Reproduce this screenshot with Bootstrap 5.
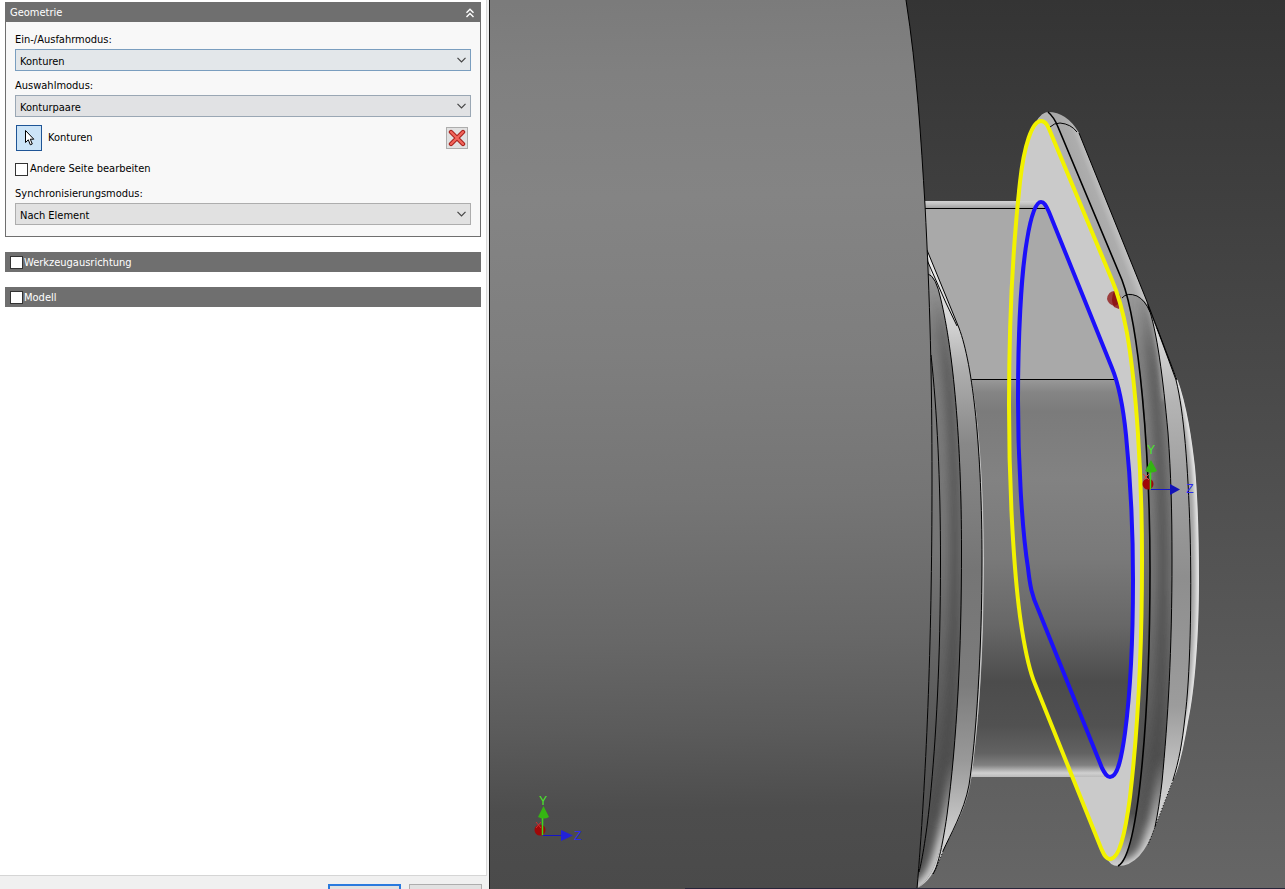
<!DOCTYPE html>
<html lang="de">
<head>
<meta charset="utf-8">
<meta name="viewport" content="width=device-width, initial-scale=1">
<title>Geometrie</title>
<link href="https://cdn.jsdelivr.net/npm/bootstrap@5.3.0/dist/css/bootstrap.min.css" rel="stylesheet">
<style>
  body { font-family: "DejaVu Sans Condensed", "DejaVu Sans", sans-serif; font-size: 11px; line-height: 16px; color: #000; background: #f0f0f0; }
  .workspace { display: grid; grid-template-columns: minmax(300px, 489px) minmax(0, 1fr); grid-template-rows: minmax(0, 1fr); }
  .tool-panel { background: #f0f0f0; }
  .panel-scroll { background: #fff; border-right: 1px solid #d9d9d9; border-bottom: 1px solid #d5d5d5; margin-right: 2px; padding: 2px 5px; }
  .section-bar { height: 20px; background: #6f6f6f; color: #fff; padding: 1px 5px 0; }
  .section-body { background: #f8f8f8; border: 1px solid #6f6f6f; border-top: 0; padding: 10px 9px 11px; }
  .section-gap { margin-top: 15px; }
  .field-label { display: block; margin-bottom: 1px; }
  .next-field { margin-top: 7px; }
  .form-select { height: 22px; padding: 2px 20px 0 4px; font-size: 11px; line-height: 19px; color: #000; border: 1px solid #adadad; border-radius: 0; background-color: #e1e1e1;
    background-image: url("data:image/svg+xml,%3Csvg xmlns='http://www.w3.org/2000/svg' width='9' height='6'%3E%3Cpath d='M.5 .8 4.5 4.8 8.5 .8' fill='none' stroke='%23444' stroke-width='1.2'/%3E%3C/svg%3E");
    background-size: 9px 6px; background-position: right 4px center; }
  .select-hot { background-color: #e3e7ea; border-color: #7a9ebf; }
  .select-cool { background-color: #e1e2e4; border-color: #9aa7b4; }
  .form-check-input[type=checkbox] { width: 13px; height: 13px; margin: 0; border: 1px solid #333; border-radius: 0; background-color: #fff; flex: none; }
  .check-text { padding-left: 2px; }
  .section-bar .check-text { padding-left: 1px; }
  .pick-row { margin: 8px 3px 10px 1px; }
  .pick-text { padding-left: 6px; }
  .other-row { margin-bottom: 9px; }
  .pick-btn { width: 26px; height: 26px; padding: 0; border: 1px solid #1f5596; border-radius: 0; background: #cce4f7; }
  .clear-btn { width: 22px; height: 22px; padding: 0; border: 1px solid #adadad; border-radius: 0; background: #e1e1e1; }
  .bar-btn { padding: 0; border: 0; line-height: 1; color: #fff; }
  .panel-footer { height: 13px; padding: 8px 7px 0; gap: 8px; }
  .footer-btn { width: 73px; height: 23px; padding: 0; border: 1px solid #adadad; border-radius: 0; background: #e1e1e1; }
  .footer-btn.is-default { border: 2px solid #2a7ade; }
  .model-view { border-left: 1px solid #1c1c1c; background: #4c4c4c; }
  .model-view text { font-family: "Liberation Sans", sans-serif; font-size: 12px; text-anchor: middle; }
  .edge { fill: none; stroke: #000; stroke-width: 1; }
  .contour { fill: none; stroke-width: 4; stroke-linejoin: round; }
</style>
</head>
<body>
<div class="workspace vh-100 overflow-hidden">
  <aside class="tool-panel d-flex flex-column overflow-hidden">
    <div class="panel-scroll flex-grow-1 overflow-hidden">
      <section>
        <header class="section-bar d-flex align-items-center justify-content-between">
          <span>Geometrie</span>
          <button type="button" class="btn bar-btn" aria-label="Einklappen">
            <svg class="d-block" width="12" height="10" viewBox="0 0 12 10" fill="none" stroke="#fff" stroke-width="1.4"><path d="M2.500 4.800 6 1.300 9.500 4.800M2.500 9 6 5.500 9.500 9"/></svg>
          </button>
        </header>
        <div class="section-body">
          <label class="field-label" for="leadMode">Ein-/Ausfahrmodus:</label>
          <select id="leadMode" class="form-select select-hot"><option>Konturen</option></select>
          <label class="field-label next-field" for="pickMode">Auswahlmodus:</label>
          <select id="pickMode" class="form-select select-cool"><option>Konturpaare</option></select>
          <div class="d-flex align-items-center pick-row">
            <button type="button" class="btn pick-btn d-flex align-items-center justify-content-center" aria-labelledby="pickText">
              <svg width="11" height="18" viewBox="0 0 11 18"><path d="M1.5 1.5V13.5L4.3 10.8L6.3 15.8L8.3 15L6.3 10.2H9.8Z" fill="#fff" stroke="#000"/></svg>
            </button>
            <span id="pickText" class="pick-text">Konturen</span>
            <button type="button" class="btn clear-btn ms-auto d-flex align-items-center justify-content-center" aria-label="Entfernen">
              <svg width="18" height="18" viewBox="0 0 18 18" fill="none" stroke-linecap="round"><path d="M3 3 15 15M15 3 3 15" stroke="#a8201c" stroke-width="4.4"/><path d="M3 3 15 15M15 3 3 15" stroke="#f2645a" stroke-width="2.4"/></svg>
            </button>
          </div>
          <div class="d-flex align-items-center other-row">
            <input class="form-check-input" type="checkbox" id="otherSide">
            <label for="otherSide" class="check-text">Andere Seite bearbeiten</label>
          </div>
          <label class="field-label" for="syncMode">Synchronisierungsmodus:</label>
          <select id="syncMode" class="form-select"><option>Nach Element</option></select>
        </div>
      </section>
      <section class="section-bar section-gap d-flex align-items-center">
        <input class="form-check-input" type="checkbox" id="toolAxis"><label for="toolAxis" class="check-text">Werkzeugausrichtung</label>
      </section>
      <section class="section-bar section-gap d-flex align-items-center">
        <input class="form-check-input" type="checkbox" id="modelOn"><label for="modelOn" class="check-text">Modell</label>
      </section>
    </div>
    <footer class="panel-footer d-flex justify-content-end flex-shrink-0">
      <button type="button" class="btn footer-btn is-default" aria-label="OK"></button>
      <button type="button" class="btn footer-btn" aria-label="Abbrechen"></button>
    </footer>
  </aside>

  <main class="model-view overflow-hidden">
    <svg class="d-block w-100 h-100" viewBox="490 0 795 889" preserveAspectRatio="xMidYMid slice" role="img" aria-label="3D-Ansicht">
      <defs>
        <linearGradient id="sky" x2="0" y2="1"><stop stop-color="#343434"/><stop offset="1" stop-color="#666"/></linearGradient>
        <linearGradient id="cyl" gradientUnits="userSpaceOnUse" x1="700" y1="0" x2="716" y2="889">
          <stop stop-color="#7b7b7b"/><stop offset=".08" stop-color="#808080"/><stop offset=".22" stop-color="#848484"/><stop offset=".4" stop-color="#7e7e7e"/><stop offset=".56" stop-color="#757575"/><stop offset=".72" stop-color="#676767"/><stop offset=".82" stop-color="#5b5b5b"/><stop offset=".91" stop-color="#4d4d4d"/><stop offset="1" stop-color="#4a4a4a"/>
        </linearGradient>
        <linearGradient id="boss" gradientUnits="userSpaceOnUse" x1="0" y1="380" x2="0" y2="777">
          <stop stop-color="#989898"/><stop offset=".03" stop-color="#858585"/><stop offset=".08" stop-color="#7b7b7b"/><stop offset=".25" stop-color="#828282"/><stop offset=".45" stop-color="#797979"/><stop offset=".62" stop-color="#676767"/><stop offset=".76" stop-color="#4c4c4c"/><stop offset=".87" stop-color="#515151"/><stop offset=".94" stop-color="#626262"/><stop offset=".97" stop-color="#808080"/><stop offset=".99" stop-color="#d0d0d0"/><stop offset="1" stop-color="#bbb"/>
        </linearGradient>
        <linearGradient id="strip" x2="0" y2="1"><stop stop-color="#d2d2d2"/><stop offset=".4" stop-color="#c4c4c4"/><stop offset="1" stop-color="#a0a0a0"/></linearGradient>
        <linearGradient id="lBand" gradientUnits="userSpaceOnUse" x1="0" y1="252" x2="0" y2="888">
          <stop stop-color="#f0f0f0"/><stop offset=".12" stop-color="#d0d0d0"/><stop offset=".18" stop-color="#b0b0b0"/><stop offset=".3" stop-color="#888"/><stop offset=".5" stop-color="#757575"/><stop offset=".68" stop-color="#7c7c7c"/><stop offset=".8" stop-color="#999"/><stop offset=".92" stop-color="#d0d0d0"/><stop offset="1" stop-color="#ccc"/>
        </linearGradient>
        <linearGradient id="lInner" gradientUnits="userSpaceOnUse" x1="0" y1="275" x2="0" y2="888">
          <stop stop-color="#999"/><stop offset=".1" stop-color="#7c7c7c"/><stop offset=".45" stop-color="#757575"/><stop offset=".75" stop-color="#575757"/><stop offset="1" stop-color="#4d4d4d"/>
        </linearGradient>
        <linearGradient id="shade" gradientUnits="userSpaceOnUse" x1="0" y1="290" x2="0" y2="840"><stop stop-color="#555" stop-opacity="0"/><stop offset=".15" stop-color="#555" stop-opacity=".9"/><stop offset="1" stop-color="#484848"/></linearGradient>
        <linearGradient id="glint" gradientUnits="userSpaceOnUse" x1="0" y1="760" x2="0" y2="880"><stop stop-color="#ddd" stop-opacity="0"/><stop offset=".7" stop-color="#ddd"/><stop offset="1" stop-color="#e4e4e4"/></linearGradient>
        <linearGradient id="rTop" gradientUnits="userSpaceOnUse" x1="1085" y1="216" x2="1116" y2="204"><stop stop-color="#a4a4a4"/><stop offset=".55" stop-color="#adadad"/><stop offset="1" stop-color="#d8d8d8"/></linearGradient>
        <linearGradient id="rLow" gradientUnits="userSpaceOnUse" x1="0" y1="295" x2="0" y2="866"><stop stop-color="#999"/><stop offset=".1" stop-color="#808080"/><stop offset=".5" stop-color="#747474"/><stop offset=".8" stop-color="#565656"/><stop offset="1" stop-color="#5c5c5c"/></linearGradient>
        <linearGradient id="rBand" gradientUnits="userSpaceOnUse" x1="0" y1="320" x2="0" y2="835"><stop stop-color="#e0e0e0"/><stop offset=".16" stop-color="#b4b4b4"/><stop offset=".3" stop-color="#a0a0a0"/><stop offset=".5" stop-color="#8e8e8e"/><stop offset=".75" stop-color="#9c9c9c"/><stop offset=".88" stop-color="#c4c4c4"/><stop offset="1" stop-color="#ddd"/></linearGradient>
        <linearGradient id="seam" gradientUnits="userSpaceOnUse" x1="0" y1="115" x2="0" y2="866"><stop stop-color="#b4b4b4"/><stop offset=".25" stop-color="#a2a2a2"/><stop offset=".45" stop-color="#858585"/><stop offset=".75" stop-color="#555"/><stop offset=".93" stop-color="#505050"/><stop offset="1" stop-color="#d0d0d0"/></linearGradient>
        <filter id="soft" x="-80%" y="-10%" width="260%" height="120%"><feGaussianBlur stdDeviation="4"/></filter>
        <filter id="softer" x="-80%" y="-20%" width="260%" height="140%"><feGaussianBlur stdDeviation="2"/></filter>
        <path id="yellowLoop" d="M1041 121C1046 121 1048 126 1052 136L1112 280C1119 296 1123 312 1127 333C1136 385 1142 470 1142 560C1142 650 1139 720 1130 797C1125 835 1119 859 1110 859C1106 859 1104 855 1101 848L1035 684C1029 670 1026 655 1022 630C1014 580 1009 490 1009 405C1009 330 1013 245 1020 182C1024 146 1032 121 1041 121Z"/>
        <path id="blueLoop" d="M1041 202C1044 202 1046 205 1049 212L1112 368C1119 385 1123 405 1126 435C1130 475 1133 530 1133 580C1133 640 1130 695 1125 733C1121 762 1117 777 1110 777C1107 777 1105 774 1102 768L1038 609C1032 596 1030 586 1028 568C1022 530 1018 460 1018 400C1018 340 1021 275 1027 240C1031 215 1036 202 1041 202Z"/>
        <clipPath id="rInnerClip"><path d="M1127 293C1136 294 1142 298 1146 303C1157 325 1163 378 1168 433C1171 475 1172 510 1172 560C1172 650 1168 720 1162 782C1159 805 1157 818 1155 826Q1142 866 1118 866Q1129 862 1136 815C1145 757 1150 650 1150 570C1150 470 1145 385 1132 318Z"/></clipPath>
        <clipPath id="lInnerClip"><path d="M928 274Q936 276 941 300C953 350 962 440 962 550C962 650 957 740 947 815C941 855 932 880 917 888C926 780 932 650 932 480Z"/></clipPath>
        <clipPath id="lOuterClip"><path d="M927 250L959 328C973 365 984 450 984 560C984 660 978 730 971 780C966 812 950 835 943 851Q932 882 917 888L935 300Z"/></clipPath>
        <clipPath id="rimClip"><path id="rim" d="M1145 300L1177 378C1187 405 1192 440 1195 467C1198 500 1199 540 1199 580C1199 635 1195 690 1188 722C1183 750 1180 765 1173 781L1155 827Z"/></clipPath>
      </defs>

      <rect x="490" width="795" height="889" fill="url(#sky)"/>

      <!-- right flange -->
      <g clip-path="url(#rimClip)">
        <use href="#rim" fill="#a4a4a4"/>
        <path d="M1177 378C1187 405 1192 440 1195 467C1198 500 1199 540 1199 580C1199 635 1195 690 1188 722L1173 781" fill="none" stroke="#eee" stroke-width="6" filter="url(#softer)"/>
      </g>
      <path d="M1145 300L1176 380C1184 412 1188 467 1190 530C1192 600 1190 680 1185 717C1182 745 1179 760 1173 780L1155 827Z" fill="url(#rBand)"/>
      <path d="M1036 122Q1042 112 1048 112Q1067 112 1079 133L1148 304L1127 310L1100 260Z" fill="url(#rTop)"/>
      <path d="M1036 122Q1042 112 1049 112Q1055 117 1058 127L1127 293C1140 330 1150 460 1150 570C1150 700 1140 855 1118 866Q1110 866 1105 856L1130 560L1100 290Z" fill="url(#seam)"/>
      <g clip-path="url(#rInnerClip)">
        <rect x="1100" y="280" width="90" height="600" fill="url(#rLow)"/>
        <path d="M1140 290C1154 350 1162 460 1163 560C1163 670 1158 760 1147 825" fill="none" stroke="url(#shade)" stroke-width="9" filter="url(#soft)"/>
        <path d="M1164 750Q1157 838 1142 856Q1132 868 1112 868" fill="none" stroke="url(#glint)" stroke-width="12" filter="url(#soft)"/>
        <path d="M1147 296Q1160 335 1165 400" fill="none" stroke="#aaa" stroke-width="4" filter="url(#softer)"/>
      </g>
      <use href="#yellowLoop" fill="#cacaca"/>
      <g class="edge">
        <path d="M1048 112Q1054 117 1058 127L1122 280C1139 325 1150 450 1150 570C1150 700 1140 855 1118 866" stroke-width="1.6"/>
        <path d="M1050 127Q1054 123 1060 123Q1071 124 1077 132M1079 133L1146 299L1177 380M1122 298Q1127 292 1137 296Q1145 300 1150 312"/>
        <path d="M1148 306C1157 330 1163 378 1168 433C1171 475 1172 510 1172 560C1172 650 1168 720 1162 782Q1159 808 1155 827"/>
        <path d="M1157 328L1176 380C1184 412 1188 467 1190 530C1192 600 1190 680 1185 717C1182 745 1179 760 1173 780"/>
        <path d="M1173 780L1155 827Q1151 838 1148 845" stroke-dasharray="1 2"/>
      </g>

      <!-- neck between the flanges -->
      <path d="M925 201H1041C1044 202 1046 205 1049 212L1112 368Q1115 374 1117 380H925Z" fill="#a9a9a9"/>
      <path d="M925 201H1041Q1045 203 1047 208H925Z" fill="url(#strip)"/>
      <path d="M960 380H1116C1123 400 1126 435 1126 435C1130 475 1133 530 1133 580C1133 640 1130 695 1125 733C1121 762 1117 777 1110 777H960Z" fill="url(#boss)"/>
      <path class="edge" d="M925 208.500H1047M970 379.500H1116"/>

      <!-- left flange -->
      <g clip-path="url(#lOuterClip)">
        <rect x="915" y="245" width="75" height="645" fill="url(#lBand)"/>
        <path d="M973 380C980 430 983 490 983 560C983 650 978 730 971 780" fill="none" stroke="#c4c4c4" stroke-width="2"/>
      </g>
      <g clip-path="url(#lInnerClip)">
        <rect x="915" y="270" width="60" height="620" fill="url(#lInner)"/>
        <path d="M934 290C948 350 955 440 955 550C955 650 949 740 938 820" fill="none" stroke="url(#shade)" stroke-width="9" filter="url(#soft)"/>
        <path d="M955 750Q948 830 936 862Q930 882 914 890" fill="none" stroke="url(#glint)" stroke-width="10" filter="url(#soft)"/>
      </g>
      <g class="edge">
        <path d="M927 250L959 328C973 365 982 450 982 560C982 650 976 740 969 785C964 812 950 835 943 851"/>
        <path d="M927 260L946 303L957 326M928 274Q936 276 941 300C953 350 961.500 440 961.500 550C961.500 650 957 740 947 815C942 850 937 868 933 874"/>
        <path d="M931 355C937 410 940.500 480 940.500 560C940.500 660 936 740 930 800C926 840 921 865 919 872"/>
        <path d="M943 851Q938 865 933 874" stroke-dasharray="1 2"/>
      </g>

      <!-- main body -->
      <path d="M490 0H906C917 70 921 140 925 205C930 300 932 380 932 480C932 650 926 780 917 889H490Z" fill="url(#cyl)"/>
      <path class="edge" d="M906 0C917 70 921 140 925 205C930 300 932 380 932 480C932 650 926 780 917 889"/>
      <path d="M685 888.500H1285" stroke="#26263a"/>

      <!-- start point marker and selected contours -->
      <g fill="#8b0c0c"><path d="M1107 299Q1108 291 1115 291Q1120 292 1121 299Q1119 305 1114 306Q1108 304 1107 299Z" fill-opacity=".75"/><path d="M1114 291L1121 300L1119 309L1114 307Q1110 300 1114 291Z" fill-opacity=".8"/></g>
      <use href="#yellowLoop" class="contour" stroke="#f2f200"/>
      <use href="#blueLoop" class="contour" stroke="#1c10fa"/>

      <!-- coordinate triads -->
      <g>
        <circle cx="540" cy="830" r="5.500" fill="#a00808"/><path d="M536 822L541 828M541 822L536 828" stroke="#d03030"/>
        <path d="M542.500 835V817" stroke="#3fd81c" stroke-width="1.500"/><path d="M543.500 806L549 817Q544 820 538 817Z" fill="#35b512"/>
        <path d="M543 835.500H562" stroke="#1414c8"/><path d="M561 830L573 835.500L561 841Z" fill="#2222d8"/>
        <text x="543" y="805" fill="#4be82a">Y</text><text x="578" y="840" fill="#2b2bf0">Z</text>
      </g>
      <g>
        <circle cx="1148" cy="484" r="5.500" fill="#a00808"/><path d="M1143 474L1149 480M1149 474L1143 480" stroke="#e04040"/>
        <path d="M1150.500 489V471" stroke="#3fd81c" stroke-width="1.500"/><path d="M1151 460L1157 471Q1151 474 1145 471Z" fill="#35b512"/>
        <path d="M1151 489.500H1170" stroke="#1414c8"/><path d="M1170 484L1180 489.500L1170 495Z" fill="#1212b8"/>
        <text x="1151" y="454" fill="#4be82a">Y</text><text x="1190" y="493" fill="#2b2bf0">Z</text>
      </g>
    </svg>
  </main>
</div>
<script src="https://cdn.jsdelivr.net/npm/bootstrap@5.3.0/dist/js/bootstrap.bundle.min.js"></script>
</body>
</html>
